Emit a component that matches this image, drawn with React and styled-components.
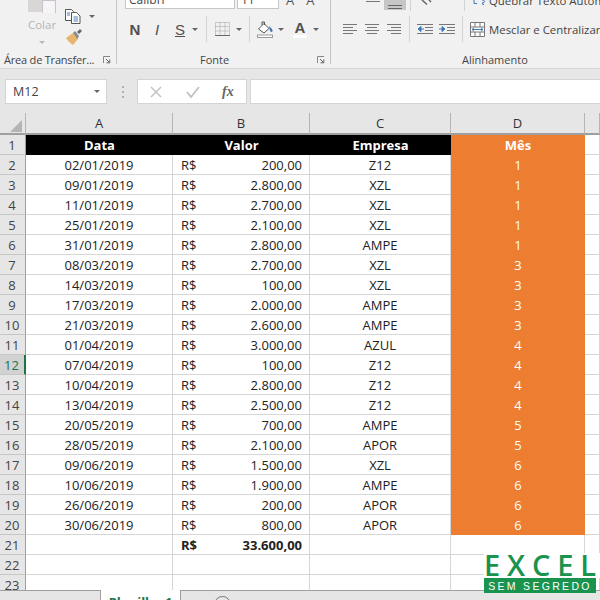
import React from 'react'
import styled, { createGlobalStyle } from 'styled-components'

const GlobalStyle = createGlobalStyle`
  html, body { margin: 0; padding: 0; background: #fff; }
  body { font-family: "Open Sans", "Liberation Sans", sans-serif; }
`

const Page = styled.div`
  position: relative;
  width: 600px;
  height: 600px;
  overflow: hidden;
  display: flex;
  flex-direction: column;
`

// ribbon, the top of it is cut off by the window
const Ribbon = styled.div`
  height: 68px;
  flex: none;
  display: flex;
  background: #f1f1f1;
  border-bottom: 1px solid #d6d6d6;
  color: #444;
`
const Group = styled.div`
  width: ${p => p.$w}px;
  flex: none;
  height: 64px;
  display: flex;
  flex-direction: column;
  border-right: 1px solid #c6c6c6;
  box-sizing: border-box;
`
const GroupLast = styled(Group)`
  border-right: 0;
`
const TopRow = styled.div`
  height: 11px;
  flex: none;
  display: flex;
  align-items: flex-start;
  overflow: hidden;
  padding-left: ${p => p.$pad || 0}px;
`
const ToolRow = styled.div`
  height: 36px;
  flex: none;
  display: flex;
  align-items: center;
  padding: 0 0 0 ${p => p.$pad || 0}px;
`
const GroupLabel = styled.div`
  height: 17px;
  flex: none;
  margin-top: 4px;
  display: flex;
  align-items: center;
  padding-left: ${p => p.$pad || 0}px;
  font-size: 11px;
  letter-spacing: ${p => p.$tight ? '-0.2px' : '0'};
  color: #444;
  white-space: nowrap;
`
const Launcher = styled.svg`
  width: 8px;
  height: 8px;
  flex: none;
  margin-left: ${p => p.$ml || 0}px;
`
const Caret = styled.span`
  width: 0;
  height: 0;
  flex: none;
  display: block;
  border-left: 3.5px solid transparent;
  border-right: 3.5px solid transparent;
  border-top: 3.5px solid ${p => p.$light ? '#b8b8b8' : '#666'};
  margin-left: ${p => p.$ml || 0}px;
`
const PasteCaret = styled(Caret)`
  margin-top: 8px;
`
const RuleV = styled.div`
  width: 1px;
  height: ${p => p.$h || 26}px;
  flex: none;
  background: #d2d2d2;
  margin-left: ${p => p.$ml || 0}px;
`
const Icon = styled.svg`
  flex: none;
  display: block;
  margin-left: ${p => p.$ml || 0}px;
`

// clipboard group
const Clipboard = styled.div`
  display: flex;
  height: 47px;
  flex: none;
  padding-left: 27px;
`
const PasteCol = styled.div`
  width: 30px;
  flex: none;
  display: flex;
  flex-direction: column;
  align-items: center;
`
const PasteText = styled.div`
  font-size: 11.5px;
  line-height: 16px;
  margin-top: 4px;
  color: #b5b5b5;
`
const SideCol = styled.div`
  flex: none;
  display: flex;
  flex-direction: column;
  margin-left: 8px;
  padding-top: 6px;
`
const SideRow = styled.div`
  display: flex;
  align-items: center;
  height: 22px;
`

// font group
const InputStub = styled.div`
  width: ${p => p.$w}px;
  height: 9px;
  flex: none;
  margin-left: ${p => p.$ml || 0}px;
  box-sizing: border-box;
  background: #fff;
  border: 1px solid #c6c6c6;
  border-top: 0;
  font-size: 12px;
  line-height: 0;
  padding-left: 3px;
  color: #444;
  overflow: hidden;
  white-space: nowrap;
`
const TopGlyph = styled.span`
  flex: none;
  font-size: 13px;
  line-height: 1px;
  color: #555;
  margin-left: ${p => p.$ml || 0}px;
`
const FontBtn = styled.span`
  flex: none;
  width: 16px;
  text-align: center;
  font-family: "Liberation Sans", sans-serif;
  font-size: 15px;
  font-weight: ${p => p.$bold ? 700 : 400};
  font-style: ${p => p.$italic ? 'italic' : 'normal'};
  text-decoration: ${p => p.$under ? 'underline' : 'none'};
  color: #505050;
  margin-left: ${p => p.$ml || 0}px;
`
const ColorA = styled.span`
  flex: none;
  width: 14px;
  text-align: center;
  font-family: "Liberation Sans", sans-serif;
  font-size: 15px;
  font-weight: 700;
  line-height: 15px;
  color: #505050;
  border-bottom: 3px solid #fff;
  margin-left: ${p => p.$ml || 0}px;
`
const Selected = styled.div`
  width: 22px;
  height: 10px;
  flex: none;
  background: #c6c6c6;
  margin-left: ${p => p.$ml || 0}px;
  display: flex;
  flex-direction: column;
  align-items: center;
  justify-content: flex-end;
`
const MergeText = styled.span`
  font-size: 11.4px;
  color: #444;
  white-space: nowrap;
  margin-left: ${p => p.$ml || 0}px;
`
const WrapText = styled(MergeText)`
  line-height: 1px;
`

// formula bar
const FormulaBar = styled.div`
  height: 44px;
  flex: none;
  display: flex;
  align-items: flex-start;
  padding-top: 10px;
  box-sizing: border-box;
  background: #e6e6e6;
`
const NameBox = styled.div`
  width: 102px;
  height: 25px;
  margin-left: 5px;
  flex: none;
  box-sizing: border-box;
  display: flex;
  align-items: center;
  justify-content: space-between;
  padding: 0 6px 0 7px;
  background: #fff;
  border: 1px solid #d4d4d4;
  font-size: 12.5px;
  color: #444;
`
const Dots = styled.div`
  width: 3px;
  height: 25px;
  flex: none;
  margin-left: 14px;
  display: flex;
  flex-direction: column;
  align-items: center;
  justify-content: center;
  gap: 3px;
  span {
    width: 2px;
    height: 2px;
    background: #b0b0b0;
  }
`
const FxBox = styled.div`
  width: 110px;
  height: 25px;
  margin-left: 13px;
  flex: none;
  box-sizing: border-box;
  display: flex;
  align-items: center;
  padding-left: 12px;
  background: #fff;
  border: 1px solid #d4d4d4;
`
const FxText = styled.span`
  font-family: "Liberation Serif", serif;
  font-style: italic;
  font-weight: 700;
  font-size: 14px;
  color: #666;
  margin-left: 22px;
`
const FormulaInput = styled.div`
  flex: 1;
  height: 25px;
  margin-left: 3px;
  box-sizing: border-box;
  background: #fff;
  border: 1px solid #d4d4d4;
  border-right: 0;
`

// sheet
const Sheet = styled.div`
  flex: 1;
  min-height: 0;
  overflow: hidden;
  display: grid;
  grid-template-columns: 26px 147px 137px 141px 134px 15px;
  grid-template-rows: 22px;
  grid-auto-rows: 20px;
  align-content: start;
  background: #fff;
  font-family: "Open Sans", "Liberation Sans", sans-serif;
  font-size: 13px;
  color: #222;
`
const Corner = styled.div`
  box-sizing: border-box;
  background: #e6e6e6;
  border-right: 1px solid #b5b5b5;
  border-bottom: 2px solid #9f9f9f;
  display: flex;
  align-items: flex-end;
  justify-content: flex-end;
  padding: 0 3px 1px 0;
`
const ColHead = styled.div`
  box-sizing: border-box;
  background: #e6e6e6;
  border-right: 1px solid #b5b5b5;
  border-bottom: 2px solid #9f9f9f;
  display: flex;
  align-items: center;
  justify-content: center;
  font-size: 13px;
  color: #333;
`
const RowHead = styled.div`
  box-sizing: border-box;
  background: ${p => p.$active ? '#d2d2d2' : '#e6e6e6'};
  color: ${p => p.$active ? '#217346' : '#444'};
  border-right: ${p => p.$active ? '2px solid #217346' : '1px solid #9f9f9f'};
  border-bottom: 1px solid #c6c6c6;
  display: flex;
  align-items: center;
  justify-content: center;
  font-size: 13px;
  padding-right: 1px;
`
const Cell = styled.div`
  box-sizing: border-box;
  border-right: 1px solid #d6d6d6;
  border-bottom: 1px solid #d6d6d6;
  display: flex;
  align-items: center;
  justify-content: ${p => p.$money ? 'space-between' : 'center'};
  padding: ${p => p.$money ? '0 7px 0 8px' : '0'};
  font-weight: ${p => p.$bold ? 700 : 400};
  white-space: nowrap;
`
const TitleCell = styled(Cell)`
  background: #000;
  color: #fff;
  font-weight: 700;
  border: 0;
`
const MonthCell = styled(Cell)`
  background: #ed7d31;
  color: #fff;
  border: 0;
`
const MonthTitle = styled(MonthCell)`
  font-weight: 700;
`

// sheet tabs
const TabBar = styled.div`
  height: 10px;
  flex: none;
  display: flex;
  overflow: hidden;
  background: #e6e6e6;
`
const TabGap = styled.div`
  width: ${p => p.$w}px;
  flex: none;
  box-sizing: border-box;
  border-top: 1px solid #9f9f9f;
  border-right: 1px solid #9f9f9f;
`
const AddGap = styled.div`
  flex: 1;
  box-sizing: border-box;
  border-top: 1px solid #9f9f9f;
  border-left: 1px solid #9f9f9f;
  padding: 5px 0 0 33px;
`
const AddCircle = styled.div`
  width: 17px;
  height: 17px;
  box-sizing: border-box;
  border: 1.5px solid #777;
  border-radius: 50%;
`
const ActiveTab = styled.div`
  width: 79px;
  flex: none;
  background: #fff;
  color: #217346;
  font-family: "Open Sans", "Liberation Sans", sans-serif;
  font-weight: 700;
  font-size: 13px;
  line-height: 24px;
  text-align: center;
  white-space: nowrap;
`

// logo lies over the grid
const Logo = styled.div`
  position: absolute;
  left: 484px;
  top: 553px;
  width: 116px;
  display: flex;
  flex-direction: column;
  align-items: stretch;
`
const LogoWord = styled.div`
  height: 25px;
  padding-right: 4px;
  display: flex;
  justify-content: space-between;
  align-items: flex-start;
  background: #fff;
  font-family: "Open Sans", "Liberation Sans", sans-serif;
  font-size: 29px;
  font-weight: 600;
  line-height: 23px;
  color: #1a934f;
`
const LogoBand = styled.div`
  height: 15px;
  margin-right: 4px;
  background: #1a934f;
  color: #fff;
  display: flex;
  align-items: center;
  justify-content: center;
  font-family: "Liberation Sans", sans-serif;
  font-size: 10.5px;
  letter-spacing: 2.3px;
  white-space: nowrap;
`

const rows = [
  ['02/01/2019', '200,00', 'Z12', 1],
  ['09/01/2019', '2.800,00', 'XZL', 1],
  ['11/01/2019', '2.700,00', 'XZL', 1],
  ['25/01/2019', '2.100,00', 'XZL', 1],
  ['31/01/2019', '2.800,00', 'AMPE', 1],
  ['08/03/2019', '2.700,00', 'XZL', 3],
  ['14/03/2019', '100,00', 'XZL', 3],
  ['17/03/2019', '2.000,00', 'AMPE', 3],
  ['21/03/2019', '2.600,00', 'AMPE', 3],
  ['01/04/2019', '3.000,00', 'AZUL', 4],
  ['07/04/2019', '100,00', 'Z12', 4],
  ['10/04/2019', '2.800,00', 'Z12', 4],
  ['13/04/2019', '2.500,00', 'Z12', 4],
  ['20/05/2019', '700,00', 'AMPE', 5],
  ['28/05/2019', '2.100,00', 'APOR', 5],
  ['09/06/2019', '1.500,00', 'XZL', 6],
  ['10/06/2019', '1.900,00', 'AMPE', 6],
  ['26/06/2019', '200,00', 'APOR', 6],
  ['30/06/2019', '800,00', 'APOR', 6],
]

function LauncherIcon({ ml }) {
  return (
    <Launcher $ml={ml} viewBox="0 0 8 8">
      <path d="M0.5 7V0.5H7" fill="none" stroke="#888" />
      <path d="M3 3l3.5 3.5M6.8 3.5v3.3H3.5" fill="none" stroke="#666" />
    </Launcher>
  )
}

function Lines({ kind, ml }) {
  // left, center and right aligned text
  const spans = {
    left: [[0, 14], [0, 10], [0, 14], [0, 10]],
    center: [[0, 14], [2, 12], [0, 14], [2, 12]],
    right: [[0, 14], [4, 14], [0, 14], [4, 14]],
  }[kind]
  return (
    <Icon $ml={ml} width="14" height="12" viewBox="0 0 14 12">
      {spans.map((s, i) => (
        <path key={i} d={`M${s[0]} ${1.5 + i * 3}H${s[1]}`} stroke="#777" strokeWidth="1" />
      ))}
    </Icon>
  )
}

function Indent({ flip, ml }) {
  return (
    <Icon $ml={ml} width="16" height="13" viewBox="0 0 16 13">
      <path d="M0 1.5h16M8 4.5h8M8 7.5h8M0 10.5h16" stroke="#777" />
      <path d={flip ? 'M0 6h4M3 3.5L6 6 3 8.5z' : 'M7 6H3M4 3.5L1 6l3 2.5z'} stroke="#3f78b5" fill="#3f78b5" />
    </Icon>
  )
}

export default function App() {
  return (
    <Page>
      <GlobalStyle />
      <Ribbon>
        <Group $w={117}>
          <Clipboard>
            <PasteCol>
              <Icon width="28" height="13" viewBox="0 0 28 13">
                <rect x="0" y="0" width="14" height="12" fill="#d9d6d6" />
                <rect x="14.5" y="0.5" width="13" height="13" fill="#f7f4f7" stroke="#c9c4cc" />
              </Icon>
              <PasteText>Colar</PasteText>
              <PasteCaret $light />
            </PasteCol>
            <SideCol>
              <SideRow>
                <Icon width="16" height="15" viewBox="0 0 16 15">
                  <path d="M0.5 0.5h6l2 2v9h-8z" fill="#fff" stroke="#555" />
                  <path d="M6.5 3.5h5l3.5 3.5v7.5h-8.500z" fill="#fff" stroke="#555" />
                  <path d="M8.500 8h4.500M8.500 10h4.500M8.500 12h4.500M2 4h3M2 6h3" stroke="#4a7fb5" />
                </Icon>
                <Caret $ml={8} />
              </SideRow>
              <SideRow>
                <Icon width="18" height="17" viewBox="0 0 18 17">
                  <path d="M1 10l7-5 5 6-5 6c-2-1-5-4-7-7z" fill="#e8b56c" />
                  <path d="M8 5l2-2 4 5-1.500 3z" fill="#8a8a8a" />
                  <path d="M12 4l3-3 2 2-3 3z" fill="#666" />
                </Icon>
              </SideRow>
            </SideCol>
          </Clipboard>
          <GroupLabel $pad={4} $tight>
            Área de Transfer...
            <LauncherIcon ml={9} />
          </GroupLabel>
        </Group>

        <Group $w={214}>
          <TopRow $pad={8}>
            <InputStub $w={110}>Calibri</InputStub>
            <InputStub $w={42} $ml={2}>11</InputStub>
            <TopGlyph $ml={7}>A</TopGlyph>
            <TopGlyph $ml={12}>A</TopGlyph>
          </TopRow>
          <ToolRow $pad={10}>
            <FontBtn $bold>N</FontBtn>
            <FontBtn $italic $ml={6}>I</FontBtn>
            <FontBtn $under $ml={7}>S</FontBtn>
            <Caret $ml={4} />
            <RuleV $ml={8} />
            <Icon $ml={8} width="15" height="14" viewBox="0 0 15 14">
              <path d="M0.500 0.500h14v13h-14zM5 0.500v13M10 0.500v13M0.500 4.500h14M0.500 9h14" fill="none" stroke="#a0a0a0" strokeDasharray="1 1" />
              <path d="M0 13.500h15" stroke="#666" />
            </Icon>
            <Caret $ml={6} />
            <RuleV $ml={7} />
            <Icon $ml={7} width="17" height="17" viewBox="0 0 17 17">
              <path d="M1.500 8L7 2.500 12 7.500 7 12z" fill="#fff" stroke="#555" />
              <path d="M5 4V1h2.500v3" fill="none" stroke="#555" />
              <path d="M12 5l3 3c1 2 .5 3-.5 3S13 10 12.500 8z" fill="#3f78b5" />
              <rect x="0.500" y="14" width="15" height="2.500" fill="#fff" stroke="#999" />
            </Icon>
            <Caret $ml={4} />
            <ColorA $ml={9}>A</ColorA>
            <Caret $ml={6} />
          </ToolRow>
          <GroupLabel $pad={83}>
            Fonte
            <LauncherIcon ml={88} />
          </GroupLabel>
        </Group>

        <GroupLast $w={269}>
          <TopRow>
            <Icon $ml={35} width="14" height="4" viewBox="0 0 14 4">
              <path d="M0 1.500h14" stroke="#777" />
            </Icon>
            <Selected $ml={4}>
              <Icon width="14" height="5" viewBox="0 0 14 5">
                <path d="M0 .5h14M0 3.500h14" stroke="#666" />
              </Icon>
            </Selected>
            <RuleV $ml={4} $h={11} />
            <Icon $ml={10} width="11" height="6" viewBox="0 0 11 6">
              <path d="M1 0l5 4.500M8 0l2 2" stroke="#666" strokeWidth="1.500" fill="none" />
            </Icon>
            <RuleV $ml={32} $h={11} />
            <Icon $ml={8} width="14" height="5" viewBox="0 0 14 5">
              <path d="M1 0v3.500h3M9 0c3 0 4 2 0 3.500M9 3.500l2-1.500M9 3.500l2 1.500" stroke="#3f78b5" fill="none" />
            </Icon>
            <WrapText $ml={2}>Quebrar Texto Autom</WrapText>
          </TopRow>
          <ToolRow $pad={12}>
            <Lines kind="left" />
            <Lines kind="center" ml={8} />
            <Lines kind="right" ml={8} />
            <RuleV $ml={8} />
            <Indent ml={7} />
            <Indent flip ml={6} />
            <RuleV $ml={7} />
            <Icon $ml={7} width="15" height="15" viewBox="0 0 15 15">
              <path d="M0.500 0.500h14v14h-14zM0.500 5h14M0.500 10h14M5 0.500V5M10 0.500V5M5 10v4.500M10 10v4.500" fill="#fff" stroke="#777" />
              <path d="M2 7.500h11M4 5.800L2 7.500l2 1.700M11 5.800l2 1.700-2 1.700" fill="none" stroke="#3f78b5" />
            </Icon>
            <MergeText $ml={4}>Mesclar e Centralizar</MergeText>
          </ToolRow>
          <GroupLabel $pad={131}>Alinhamento</GroupLabel>
        </GroupLast>
      </Ribbon>

      <FormulaBar>
        <NameBox>
          M12
          <Caret />
        </NameBox>
        <Dots><span /><span /><span /></Dots>
        <FxBox>
          <Icon width="12" height="12" viewBox="0 0 12 12">
            <path d="M1 1l10 10M11 1L1 11" stroke="#c4c4c4" strokeWidth="1.500" />
          </Icon>
          <Icon $ml={24} width="14" height="12" viewBox="0 0 14 12">
            <path d="M1 6l4 5 8-10" fill="none" stroke="#c4c4c4" strokeWidth="2" />
          </Icon>
          <FxText>fx</FxText>
        </FxBox>
        <FormulaInput />
      </FormulaBar>

      <Sheet>
        <Corner>
          <Icon width="12" height="12" viewBox="0 0 12 12">
            <path d="M12 0v12H0z" fill="#b4b4b4" />
          </Icon>
        </Corner>
        <ColHead>A</ColHead>
        <ColHead>B</ColHead>
        <ColHead>C</ColHead>
        <ColHead>D</ColHead>
        <ColHead />

        <RowHead>1</RowHead>
        <TitleCell>Data</TitleCell>
        <TitleCell>Valor</TitleCell>
        <TitleCell>Empresa</TitleCell>
        <MonthTitle>Mês</MonthTitle>
        <Cell />

        {rows.map((r, i) => (
          <React.Fragment key={i}>
            <RowHead $active={i + 2 === 12}>{i + 2}</RowHead>
            <Cell>{r[0]}</Cell>
            <Cell $money><span>R$</span><span>{r[1]}</span></Cell>
            <Cell>{r[2]}</Cell>
            <MonthCell>{r[3]}</MonthCell>
            <Cell />
          </React.Fragment>
        ))}

        <RowHead>21</RowHead>
        <Cell />
        <Cell $money $bold><span>R$</span><span>33.600,00</span></Cell>
        <Cell />
        <Cell />
        <Cell />

        {[22, 23].map(n => (
          <React.Fragment key={n}>
            <RowHead>{n}</RowHead>
            <Cell />
            <Cell />
            <Cell />
            <Cell />
            <Cell />
          </React.Fragment>
        ))}
      </Sheet>

      <TabBar>
        <TabGap $w={101} />
        <ActiveTab>Planilha 1</ActiveTab>
        <AddGap><AddCircle /></AddGap>
      </TabBar>

      <Logo>
        <LogoWord>
          <span>E</span><span>X</span><span>C</span><span>E</span><span>L</span>
        </LogoWord>
        <LogoBand>SEM SEGREDO</LogoBand>
      </Logo>
    </Page>
  )
}
